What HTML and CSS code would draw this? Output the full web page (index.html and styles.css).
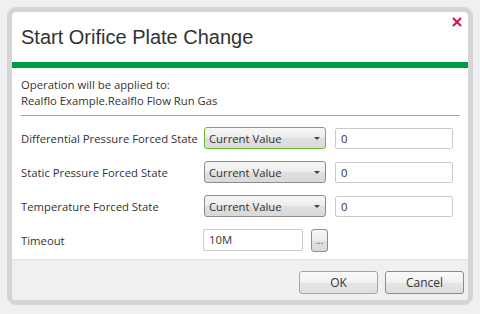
FILE: index.html
```html
<!DOCTYPE html>
<html lang="en">
<head>
  <meta charset="UTF-8" />
  <title>Start Orifice Plate Change</title>
  <link rel="stylesheet" href="styles.css">
</head>
<body>
  <div class="dialog">
    <div class="header">
      <h1>Start Orifice Plate Change</h1>
      <span class="close">
        <svg width="10" height="10" viewBox="0 0 10 10">
          <path d="M1 1 L9 9 M9 1 L1 9" stroke="#d0135a" stroke-width="2.2" fill="none"/>
        </svg>
      </span>
    </div>
    <div class="accent"></div>

    <div class="content">
      <div class="info">
        <div>Operation will be applied to:</div>
        <div>Realflo Example.Realflo Flow Run Gas</div>
      </div>
      <div class="rule"></div>

      <div class="rows">
        <div class="row">
          <label>Differential Pressure Forced State</label>
          <div class="combo active"><span>Current Value</span><span class="arrow"></span></div>
          <div class="field">0</div>
        </div>
        <div class="row">
          <label>Static Pressure Forced State</label>
          <div class="combo"><span>Current Value</span><span class="arrow"></span></div>
          <div class="field">0</div>
        </div>
        <div class="row">
          <label>Temperature Forced State</label>
          <div class="combo"><span>Current Value</span><span class="arrow"></span></div>
          <div class="field">0</div>
        </div>
        <div class="row timeout">
          <label>Timeout</label>
          <div class="field short">10M</div>
          <div class="dots">...</div>
        </div>
      </div>
    </div>

    <div class="footer">
      <button class="btn ok">OK</button>
      <button class="btn">Cancel</button>
    </div>
  </div>
</body>
</html>
```

FILE: styles.css
```css
body {
  margin: 0;
  background: #f0f0f0;
  font-family: 'Open Sans', 'Noto Sans', sans-serif;
  font-size: 11.3px;
  color: #333;
}
.dialog {
  margin: 7px;
  width: 456px;
  height: 288px;
  border: 5px solid #d5d5d5;
  border-radius: 9px;
  background: #fff;
  display: flex;
  flex-direction: column;
  overflow: hidden;
}
.header {
  height: 50px;
  display: flex;
  align-items: center;
  justify-content: space-between;
  padding-left: 9px;
}
h1 {
  margin: 0;
  font-family: 'Liberation Sans', Arial, sans-serif;
  font-weight: normal;
  font-size: 20px;
  color: #333;
}
.close {
  align-self: flex-start;
  margin: 5px 6px 0 0;
  display: flex;
}
.accent {
  height: 6px;
  background: #009b48;
}
.content {
  padding: 0 8px 0 9px;
}
.info {
  padding-top: 9px;
  line-height: 16px;
}
.rule {
  margin-top: 6px;
  height: 1px;
  background: #a6a6a6;
}
.rows {
  margin-top: 11px;
  display: flex;
  flex-direction: column;
  gap: 12px;
}
.row {
  display: flex;
  align-items: center;
  height: 22px;
}
.row label {
  width: 183px;
  white-space: nowrap;
}
.combo {
  width: 122px;
  height: 22px;
  box-sizing: border-box;
  border: 1px solid #8c8c8c;
  border-radius: 3px;
  background: linear-gradient(#f7f7f7, #ececec 50%, #e0e0e0 51%, #d9d9d9);
  display: flex;
  align-items: center;
  justify-content: space-between;
  padding: 0 5px 0 4px;
  margin-right: 9px;
}
.combo.active {
  border-color: #6dbb2b;
}
.arrow {
  width: 0;
  height: 0;
  border-left: 3px solid transparent;
  border-right: 3px solid transparent;
  border-top: 3px solid #444;
}
.field {
  width: 118px;
  height: 21px;
  box-sizing: border-box;
  border: 1px solid #cbcbcb;
  border-radius: 2px;
  background: #fff;
  padding-left: 5px;
  line-height: 19px;
}
.timeout label {
  width: 182px;
}
.field.short {
  width: 100px;
  height: 22px;
  line-height: 20px;
}
.dots {
  margin-left: 8px;
  width: 17px;
  height: 23px;
  box-sizing: border-box;
  border: 1px solid #8c8c8c;
  border-radius: 3px;
  background: linear-gradient(#f7f7f7, #ececec 50%, #e0e0e0 51%, #d9d9d9);
  font-size: 9px;
  text-align: center;
  line-height: 22px;
}
.footer {
  margin-top: auto;
  height: 41px;
  border-top: 1px solid #e2e2e2;
  background: #f0f0f0;
  display: flex;
  justify-content: flex-end;
  align-items: flex-start;
  gap: 7px;
  padding: 11px 4px 0 0;
  box-sizing: border-box;
}
.btn {
  width: 79px;
  height: 23px;
  border: 1px solid #8a8a8a;
  border-radius: 3px;
  background: linear-gradient(#fbfbfb, #f0f0f0 50%, #e5e5e5 51%, #dedede);
  font-family: 'Open Sans', 'Noto Sans', sans-serif;
  font-size: 12px;
  color: #333;
  padding: 0;
}
.btn.ok {
  border-color: #8cc63f;
}
```
